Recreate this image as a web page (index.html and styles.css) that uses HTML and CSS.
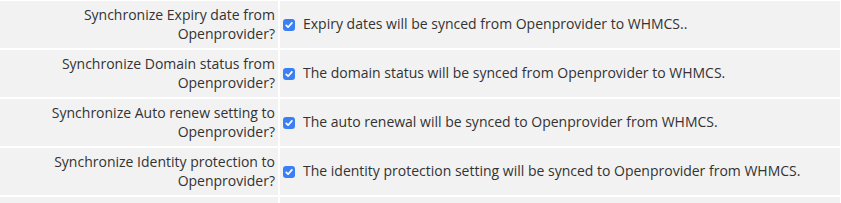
FILE: index.html
```html
<!DOCTYPE html>
<html lang="en">
<head>
    <meta charset="UTF-8">
    <meta name="viewport" content="width=device-width, initial-scale=1.0">
    <title>Openprovider sync settings</title>
    <link rel="stylesheet" href="styles.css">
</head>
<body>
    <div class="form-table">
        <div class="field-label">Synchronize Expiry date from Openprovider?</div>
        <div class="field-value">
            <span class="check"><svg viewBox="0 0 12 12"><path d="M3.2 6.3 L5.1 8.2 L8.9 3.9" /></svg></span>
            <span>Expiry dates will be synced from Openprovider to WHMCS..</span>
        </div>

        <div class="field-label">Synchronize Domain status from Openprovider?</div>
        <div class="field-value">
            <span class="check"><svg viewBox="0 0 12 12"><path d="M3.2 6.3 L5.1 8.2 L8.9 3.9" /></svg></span>
            <span>The domain status will be synced from Openprovider to WHMCS.</span>
        </div>

        <div class="field-label">Synchronize Auto renew setting to Openprovider?</div>
        <div class="field-value">
            <span class="check"><svg viewBox="0 0 12 12"><path d="M3.2 6.3 L5.1 8.2 L8.9 3.9" /></svg></span>
            <span>The auto renewal will be synced to Openprovider from WHMCS.</span>
        </div>

        <div class="field-label">Synchronize Identity protection to Openprovider?</div>
        <div class="field-value">
            <span class="check"><svg viewBox="0 0 12 12"><path d="M3.2 6.3 L5.1 8.2 L8.9 3.9" /></svg></span>
            <span>The identity protection setting will be synced to Openprovider from WHMCS.</span>
        </div>

        <div class="field-label empty"></div>
        <div class="field-value empty"></div>
    </div>
</body>
</html>
```

FILE: styles.css
```css
* {
    margin: 0;
    padding: 0;
    box-sizing: border-box;
}

body {
    font-family: "Open Sans", "Liberation Sans", sans-serif;
    font-size: 14px;
    line-height: 18.5px;
    color: #333;
    background: #fff;
    padding-top: 1px;
}

.form-table {
    display: grid;
    grid-template-columns: 278px 1fr;
    gap: 2px;
    padding-right: 1px;
}

.field-label,
.field-value {
    background: #f2f2f2;
    min-height: 47px;
    padding: 5px 4px 5px 5px;
}

.field-label {
    text-align: right;
    display: flex;
    align-items: center;
    justify-content: flex-end;
    padding-right: 3px;
}

.field-value {
    display: flex;
    align-items: center;
    padding-left: 3px;
    gap: 8px;
}

.check {
    width: 12px;
    height: 12px;
    border-radius: 3px;
    background: #3b7ff5;
    display: flex;
    flex-shrink: 0;
}

.check svg {
    width: 12px;
    height: 12px;
    fill: none;
    stroke: #fff;
    stroke-width: 1.7;
    stroke-linecap: round;
    stroke-linejoin: round;
}
```
